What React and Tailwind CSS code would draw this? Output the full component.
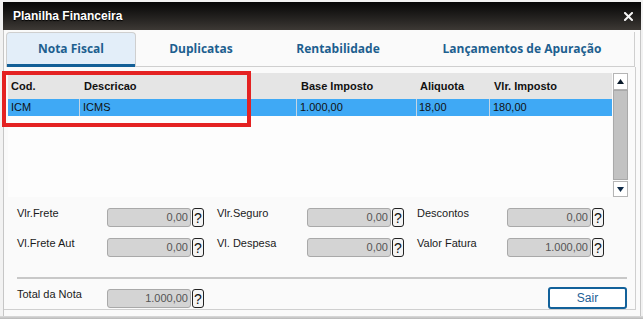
import React from "react";

const Field = ({ label, value }) => (
  <div className="flex w-[200px] items-start">
    <div className="w-[90px] text-[11px] leading-[13px] text-[#1a1a1a] -mt-[1px]">{label}</div>
    <div className="w-[84px] h-[19px] rounded-[3px] border border-[#a9a9a9] bg-[#d4d4d4] flex items-center justify-end pr-[2px] text-[11px] text-[#555]">
      {value}
    </div>
    <div className="ml-[1px] w-[12px] h-[19px] rounded-[3px] border border-[#222] bg-[#f4f4f4] flex items-center justify-center text-[14px] leading-none text-[#111]">
      ?
    </div>
  </div>
);

export default function App() {
  return (
    <div
      className="relative w-[643px] h-[319px] bg-[#f2f2f2] flex flex-col overflow-hidden"
      style={{ fontFamily: '"Liberation Sans", Arial, sans-serif' }}
    >
      <div className="h-[2px] shrink-0" />
      <div className="ml-[3px] w-[638px] h-[314px] shrink-0 flex flex-col">
        {/* Title bar */}
        <div className="h-[28px] shrink-0 bg-gradient-to-b from-[#070707] to-[#3d3935] flex items-center justify-between pl-[10px] pr-[8px]">
          <span
            className="text-white font-bold text-[12px]"
            style={{ textShadow: "0 1px 1px #000" }}
          >
            Planilha Financeira
          </span>
          <svg width="9" height="9" viewBox="0 0 9 9">
            <path d="M1 1 L8 8 M8 1 L1 8" stroke="#f4f4f4" strokeWidth="2" strokeLinecap="square" />
          </svg>
        </div>
        {/* Body */}
        <div className="flex-1 bg-[#fafafa] border-l border-r border-[#c6c6c6] flex flex-col">
          {/* Tabs */}
          <div
            className="h-[37px] shrink-0 flex items-end"
            style={{ fontFamily: '"Open Sans", "Noto Sans", sans-serif' }}
          >
            <div className="ml-[2px] w-[130px] h-[35px] rounded-t-[4px] border border-b-0 border-[#cfcfcf] bg-[#e3eef9] flex flex-col">
              <div className="flex-1 flex items-center justify-center text-[12px] font-bold text-[#1d5f8f]">
                Nota Fiscal
              </div>
              <div className="h-[3px] bg-[#135f97]" />
            </div>
            <div className="w-[499px] h-[35px] border-b border-[#cfcfcf] border-r flex items-center text-[12px] font-bold text-[#1d5f8f]">
              <div className="w-[130px] text-center">Duplicatas</div>
              <div className="w-[144px] text-center">Rentabilidade</div>
              <div className="w-[224px] text-center">Lançamentos de Apuração</div>
            </div>
          </div>
          {/* Panel */}
          <div className="w-[632px] h-[243px] border-r border-b border-[#cfcfcf] flex flex-col">
            {/* Grid */}
            <div className="mt-[6px] ml-[4px] h-[124px] flex gap-[1px]">
              <div className="w-[604px] bg-[#fdfdfd] flex flex-col text-[11px] text-[#111]">
                <div className="h-[26px] bg-[#e5e5e5] flex items-center font-bold">
                  <div className="w-[72px] pl-[3px]">Cod.</div>
                  <div className="w-[217px] pl-[4px]">Descricao</div>
                  <div className="w-[120px] pl-[4px]">Base Imposto</div>
                  <div className="w-[73px] pl-[3px]">Aliquota</div>
                  <div className="w-[122px] pl-[4px]">Vlr. Imposto</div>
                </div>
                <div className="h-[17px] bg-[#3fa9f5] flex items-stretch">
                  <div className="w-[72px] pl-[3px] flex items-center border-r border-[#c3d5e4]">ICM</div>
                  <div className="w-[217px] pl-[3px] flex items-center border-r border-[#c3d5e4]">ICMS</div>
                  <div className="w-[120px] pl-[3px] flex items-center border-r border-[#c3d5e4]">1.000,00</div>
                  <div className="w-[73px] pl-[2px] flex items-center border-r border-[#c3d5e4]">18,00</div>
                  <div className="flex-1 pl-[3px] flex items-center">180,00</div>
                </div>
              </div>
              {/* Scrollbar */}
              <div className="w-[15px] flex flex-col">
                <div className="h-[17px] border border-[#b5b5b5] bg-white flex items-center justify-center">
                  <svg width="7" height="5" viewBox="0 0 7 5">
                    <path d="M3.5 0 L7 5 L0 5 Z" fill="#0a1a2a" />
                  </svg>
                </div>
                <div className="flex-1 bg-[#c2c2c2] border border-[#a9a9a9]" />
                <div className="mt-[1px] h-[16px] border border-[#b5b5b5] bg-white flex items-center justify-center">
                  <svg width="7" height="5" viewBox="0 0 7 5">
                    <path d="M0 0 L7 0 L3.5 5 Z" fill="#0d2a48" />
                  </svg>
                </div>
              </div>
            </div>
            {/* Fields */}
            <div className="mt-[11px] ml-[13px] flex">
              <Field label="Vlr.Frete" value="0,00" />
              <Field label="Vlr.Seguro" value="0,00" />
              <Field label="Descontos" value="0,00" />
            </div>
            <div className="mt-[11px] ml-[13px] flex">
              <Field label="Vl.Frete Aut" value="0,00" />
              <Field label="Vl. Despesa" value="0,00" />
              <Field label="Valor Fatura" value="1.000,00" />
            </div>
            <div className="mt-[20px] ml-[13px] w-[610px] h-[2px] bg-[#c8c8c8]" />
            <div className="mt-[8px] ml-[13px] mr-[8px] flex items-center">
              <div className="mt-[1px]">
                <Field label="Total da Nota" value="1.000,00" />
              </div>
              <div className="flex-1" />
              <button className="w-[79px] h-[22px] rounded-[3px] border-2 border-[#12619a] bg-white text-[12px] text-[#1d6196]">
                Sair
              </button>
            </div>
          </div>
        </div>
      </div>
      <div className="flex-1 bg-gradient-to-b from-[#dcdcdc] to-[#b8b8b8]" />
      {/* Red annotation box */}
      <div className="absolute left-[2px] top-[71px] w-[249px] h-[56px] border-[4px] border-[#e42222]" />
    </div>
  );
}
